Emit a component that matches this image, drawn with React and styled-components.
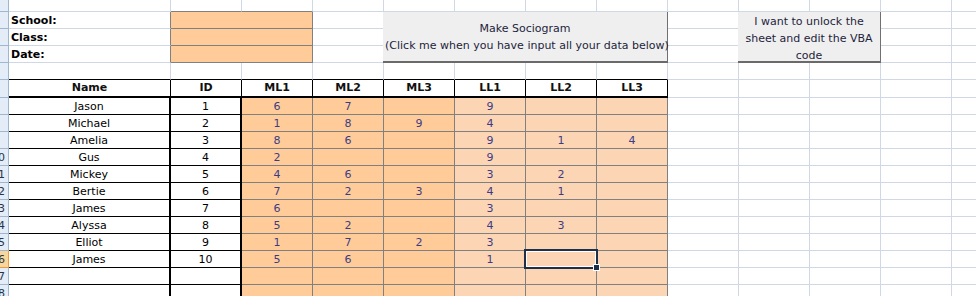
import React from 'react';
import styled, { createGlobalStyle, css } from 'styled-components';

const GRID = '#d0d7e5';
const INK = '#000000';
const EDGE = '#808080';
const ML_FILL = '#ffcc99';
const LL_FILL = '#fcd5b4';
const NUM = '#3c3c84';

const Global = createGlobalStyle`
  html, body { margin: 0; padding: 0; background: #fff; overflow: hidden; }
  body { font-family: "DejaVu Sans", Verdana, sans-serif; font-size: 11px; }
`;

const Viewport = styled.div`
  position: relative;
  width: 976px;
  height: 296px;
  overflow: hidden;
  background: #fff;
`;

const Sheet = styled.div`
  display: grid;
  grid-template-columns: 9px 162px repeat(12, 71px);
  grid-template-rows: 12px repeat(4, 17px) 18px repeat(12, 17px);
  width: max-content;
`;

const cellBase = css`
  box-sizing: border-box;
  min-width: 0;
  display: flex;
  align-items: flex-end;
  padding: 0 2px 1px;
  white-space: nowrap;
  line-height: 13px;
  font-size: 11px;
  color: ${INK};
`;

const RowHead = styled.div`
  box-sizing: border-box;
  background: ${p => (p.$active ? '#f9d69a' : '#e4ecf7')};
  border-right: 1px solid ${p => (p.$active ? '#f09a3c' : '#9eb6ce')};
  border-bottom: 1px solid ${p => (p.$active ? '#f09a3c' : '#9eb6ce')};
  color: #27354a;
  font-size: 11px;
  line-height: 13px;
  display: flex;
  align-items: center;
  justify-content: flex-end;
  padding-right: 3px;
  overflow: hidden;
  white-space: nowrap;
`;

const BlankCell = styled.div`
  ${cellBase};
  border-right: 1px solid ${p => p.$rc || GRID};
  border-bottom: 1px solid ${p => p.$bc || GRID};
`;

const LabelCell = styled.div`
  ${cellBase};
  font-weight: bold;
  justify-content: flex-start;
  border-right: 1px solid ${EDGE};
  border-bottom: 1px solid ${GRID};
`;

const InfoCell = styled.div`
  ${cellBase};
  grid-column: span 2;
  background: ${ML_FILL};
  border-right: 1px solid ${EDGE};
  border-bottom: 1px solid ${EDGE};
`;

const HeadCell = styled.div`
  ${cellBase};
  font-weight: bold;
  justify-content: center;
  color: #111;
  padding-bottom: 2px;
  border-right: 1px solid ${INK};
  border-bottom: 2px solid ${INK};
`;

const NameCell = styled.div`
  ${cellBase};
  justify-content: center;
  border-right: 2px solid ${INK};
  border-bottom: 1px solid ${INK};
`;

const ScoreCell = styled.div`
  ${cellBase};
  position: relative;
  justify-content: center;
  color: ${NUM};
  background: ${p => (p.$tone === 'll' ? LL_FILL : ML_FILL)};
  border-right: 1px solid ${EDGE};
  border-bottom: 1px solid ${EDGE};
`;

const Selection = styled.div`
  position: absolute;
  left: -2px;
  top: -2px;
  right: -2px;
  bottom: -2px;
  border: 2px solid #1f3049;
  box-shadow: inset 0 0 0 1px #ffffff;
  z-index: 2;
  pointer-events: none;
`;

const FillHandle = styled.div`
  position: absolute;
  right: -4px;
  bottom: -4px;
  width: 5px;
  height: 5px;
  background: #1f3049;
  border: 1px solid #ffffff;
`;

const MacroButton = styled.div`
  position: absolute;
  left: ${p => p.$left}px;
  top: 12px;
  width: ${p => p.$width}px;
  height: 51px;
  box-sizing: border-box;
  padding: ${p => p.$padTop}px 2px 0;
  background: #efefef;
  border-right: 1px solid #707070;
  border-bottom: 2px solid #6a6a6a;
  font-family: "DejaVu Sans", Verdana, sans-serif;
  font-size: 11px;
  line-height: 17px;
  color: #1e1e3c;
  text-align: center;
  white-space: nowrap;
  z-index: 3;
  cursor: default;
`;

const people = [
  ['Jason', 1, [6, 7, '', 9, '', '']],
  ['Michael', 2, [1, 8, 9, 4, '', '']],
  ['Amelia', 3, [8, 6, '', 9, 1, 4]],
  ['Gus', 4, [2, '', '', 9, '', '']],
  ['Mickey', 5, [4, 6, '', 3, 2, '']],
  ['Bertie', 6, [7, 2, 3, 4, 1, '']],
  ['James', 7, [6, '', '', 3, '', '']],
  ['Alyssa', 8, [5, 2, '', 4, 3, '']],
  ['Elliot', 9, [1, 7, 2, 3, '', '']],
  ['James', 10, [5, 6, '', 1, '', '']],
  ['', '', ['', '', '', '', '', '']],
  ['', '', ['', '', '', '', '', '']],
];

const headers = ['Name', 'ID', 'ML1', 'ML2', 'ML3', 'LL1', 'LL2', 'LL3'];
const infoLabels = ['School:', 'Class:', 'Date:'];

const rowLabel = n => (n >= 10 ? String(n).slice(-1) : '');

const blanks = (count, key, props = {}) =>
  Array.from({ length: count }, (_, i) => <BlankCell key={`${key}-${i}`} {...props} />);

export default function App() {
  return (
    <>
      <Global />
      <Viewport>
        <Sheet>
          {/* row 1 */}
          <RowHead>{rowLabel(1)}</RowHead>
          <BlankCell />
          <BlankCell $bc={EDGE} />
          <BlankCell $bc={EDGE} />
          {blanks(10, 'r1')}

          {/* rows 2-4 */}
          {infoLabels.map((label, i) => (
            <React.Fragment key={label}>
              <RowHead>{rowLabel(i + 2)}</RowHead>
              <LabelCell>{label}</LabelCell>
              <InfoCell />
              {blanks(10, `info${i}`)}
            </React.Fragment>
          ))}

          {/* row 5 */}
          <RowHead>{rowLabel(5)}</RowHead>
          {blanks(8, 'r5a', { $bc: INK })}
          {blanks(5, 'r5b')}

          {/* row 6 header */}
          <RowHead>{rowLabel(6)}</RowHead>
          {headers.map(h => (
            <HeadCell key={h}>{h}</HeadCell>
          ))}
          {blanks(5, 'r6')}

          {/* data rows */}
          {people.map(([name, id, scores], r) => {
            const rowNo = r + 7;
            return (
              <React.Fragment key={rowNo}>
                <RowHead $active={rowNo === 16}>{rowLabel(rowNo)}</RowHead>
                <NameCell>{name}</NameCell>
                <NameCell>{id}</NameCell>
                {scores.map((s, c) => (
                  <ScoreCell key={c} $tone={c < 3 ? 'ml' : 'll'}>
                    {s}
                    {rowNo === 16 && c === 4 && (
                      <Selection>
                        <FillHandle />
                      </Selection>
                    )}
                  </ScoreCell>
                ))}
                {blanks(5, `d${rowNo}`)}
              </React.Fragment>
            );
          })}
        </Sheet>

        <MacroButton $left={383} $width={285} $padTop={8}>
          Make Sociogram
          <br />
          (Click me when you have input all your data below)
        </MacroButton>
        <MacroButton $left={738} $width={143} $padTop={1}>
          I want to unlock the
          <br />
          sheet and edit the VBA
          <br />
          code
        </MacroButton>
      </Viewport>
    </>
  );
}
